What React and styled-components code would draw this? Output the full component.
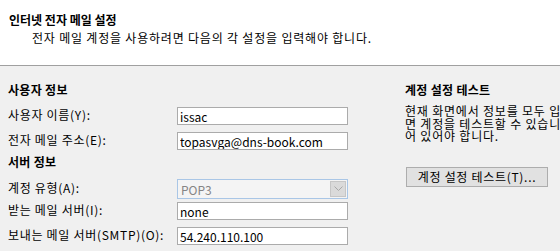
import styled, { createGlobalStyle } from 'styled-components';

const GlobalStyle = createGlobalStyle`
  html, body {
    margin: 0;
    padding: 0;
    background: #f0f0f0;
    width: 560px;
    height: 251px;
    overflow: hidden;
  }
  * {
    box-sizing: border-box;
  }
  body {
    font-family: "Noto Sans CJK KR", "Noto Sans", sans-serif;
    font-size: 12px;
    color: #000;
  }
`;

const Header = styled.header`
  height: 66px;
  background: #fff;
  border-bottom: 1px solid #a0a0a0;
  padding: 12px 0 0 9px;
`;

const Title = styled.h1`
  margin: 0;
  font-size: 12px;
  font-weight: bold;
  line-height: 16px;
`;

const Subtitle = styled.p`
  margin: 2px 0 0 23px;
  font-size: 12px;
  line-height: 16px;
  letter-spacing: 0.8px;
`;

const Body = styled.main`
  display: flex;
  padding: 16px 0 0 8px;
`;

const LeftColumn = styled.section`
  width: 340px;
  display: flex;
  flex-direction: column;
`;

const RightColumn = styled.section`
  margin-left: 57px;
  flex: 1;
  overflow: hidden;
  display: flex;
  flex-direction: column;
  align-items: flex-start;
`;

const SectionTitle = styled.h2`
  margin: ${p => p.$top || 0}px 0 0 0;
  font-size: 12px;
  font-weight: bold;
  line-height: 16px;
  white-space: nowrap;
  letter-spacing: 0.3px;
`;

const Row = styled.div`
  display: flex;
  align-items: center;
  margin-top: ${p => p.$top || 0}px;
  height: ${p => p.$h || 18}px;
`;

const Label = styled.label`
  width: 169px;
  line-height: 16px;
  white-space: nowrap;
  letter-spacing: 0.7px;
  margin-top: -3px;
`;

const TextBox = styled.input`
  width: 171px;
  height: 18px;
  border: 1px solid #ababab;
  background: #fff;
  padding: 0 2px;
  font: inherit;
  font-size: 12px;
  color: #000;
  outline: none;
`;

const ComboBox = styled.div`
  width: 171px;
  height: 20px;
  border: 1px solid #a9c6e6;
  background: #f4f4f4;
  display: flex;
  align-items: center;
  justify-content: space-between;
  padding: 0 1px 0 3px;
  color: #858585;
`;

const ArrowBox = styled.span`
  width: 16px;
  height: 16px;
  background: #dadada;
  border: 1px solid #c6c6c6;
  display: flex;
  align-items: center;
  justify-content: center;
`;

const Desc = styled.p`
  margin: 7px 0 0 0;
  line-height: 12.5px;
  white-space: nowrap;
  letter-spacing: 0.8px;
`;

const Button = styled.button`
  margin: 24px 0 0 1px;
  width: 142px;
  height: 20px;
  background: #e1e1e1;
  border: 1px solid #adadad;
  font: inherit;
  font-size: 12px;
  letter-spacing: 0.7px;
  color: #000;
  padding: 0;
  line-height: 16px;
`;

export default function App() {
  return (
    <>
      <GlobalStyle />
      <Header>
        <Title>인터넷 전자 메일 설정</Title>
        <Subtitle>전자 메일 계정을 사용하려면 다음의 각 설정을 입력해야 합니다.</Subtitle>
      </Header>
      <Body>
        <LeftColumn>
          <SectionTitle>사용자 정보</SectionTitle>
          <Row $top={9}>
            <Label>사용자 이름(Y):</Label>
            <TextBox defaultValue="issac" />
          </Row>
          <Row $top={7}>
            <Label>전자 메일 주소(E):</Label>
            <TextBox defaultValue="topasvga@dns-book.com" />
          </Row>
          <SectionTitle $top={4}>서버 정보</SectionTitle>
          <Row $top={9} $h={20}>
            <Label>계정 유형(A):</Label>
            <ComboBox>
              <span>POP3</span>
              <ArrowBox>
                <svg width="9" height="6" viewBox="0 0 9 6">
                  <path d="M0.5 0.5 L4.5 4.5 L8.5 0.5" fill="none" stroke="#a8a8a8" strokeWidth="1" />
                </svg>
              </ArrowBox>
            </ComboBox>
          </Row>
          <Row $top={3}>
            <Label>받는 메일 서버(I):</Label>
            <TextBox defaultValue="none" />
          </Row>
          <Row $top={7}>
            <Label>보내는 메일 서버(SMTP)(O):</Label>
            <TextBox defaultValue="54.240.110.100" />
          </Row>
        </LeftColumn>
        <RightColumn>
          <SectionTitle>계정 설정 테스트</SectionTitle>
          <Desc>
            현재 화면에서 정보를 모두 입력하
            <br />
            면 계정을 테스트할 수 있습니다. 네트워크에 연결되
            <br />
            어 있어야 합니다.
          </Desc>
          <Button>계정 설정 테스트(T)...</Button>
        </RightColumn>
      </Body>
    </>
  );
}
